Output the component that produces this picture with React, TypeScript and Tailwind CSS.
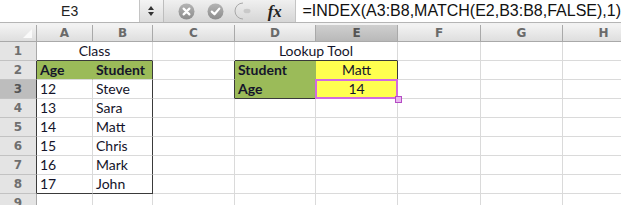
import React from "react";

type Cell = {
  text?: string;
  span?: number;
  bg?: string;
  bold?: boolean;
  align?: "left" | "center";
  r?: string;
  b?: string;
  sel?: boolean;
};

const cols = ["A", "B", "C", "D", "E", "F", "G", "H"];
const widths = "grid-cols-[37px_56px_60px_82px_81px_82px_83px_82px_82px]";

const DARK = "border-r-[#3a3a3a]";
const DARKB = "border-b-[#3a3a3a]";

const names = ["Steve", "Sara", "Matt", "Chris", "Mark", "John"];

function buildRows(): Cell[][] {
  const rows: Cell[][] = [];
  // row 1
  rows.push([
    { text: "Class", span: 2, align: "center", b: DARKB },
    {},
    { text: "Lookup Tool", span: 2, align: "center", b: DARKB },
    {},
    {},
    {},
  ]);
  // row 2
  rows.push([
    { text: "Age", bold: true, bg: "bg-[#9bbb59]", r: "border-r-[#9bbb59]" },
    { text: "Student", bold: true, bg: "bg-[#9bbb59]", r: DARK },
    { r: DARK },
    { text: "Student", bold: true, bg: "bg-[#9bbb59]", r: "border-r-[#9bbb59]", b: "border-b-[#9bbb59]" },
    { text: "Matt", align: "center", bg: "bg-[#ffff4f]", r: DARK, b: "border-b-[#ffff4f]" },
    {},
    {},
    {},
  ]);
  for (let i = 0; i < 6; i++) {
    const last = i === 5;
    const row: Cell[] = [
      { text: String(12 + i), b: last ? DARKB : undefined },
      { text: names[i], r: DARK, b: last ? DARKB : undefined },
    ];
    if (i === 0) {
      row.push({ r: DARK });
      row.push({ text: "Age", bold: true, bg: "bg-[#9bbb59]", r: "border-r-[#9bbb59]", b: DARKB });
      row.push({ text: "14", align: "center", bg: "bg-[#ffff4f]", r: DARK, b: DARKB, sel: true });
    } else {
      row.push({}, {}, {});
    }
    row.push({}, {}, {});
    rows.push(row);
  }
  rows.push([{}, {}, {}, {}, {}, {}, {}, {}]);
  return rows;
}

function Circle({ check }: { check?: boolean }) {
  return (
    <svg width="17" height="17" viewBox="0 0 17 17">
      <defs>
        <linearGradient id={check ? "gc" : "gx"} x1="0" y1="0" x2="0" y2="1">
          <stop offset="0" stopColor="#b4b4b4" />
          <stop offset="1" stopColor="#8c8c8c" />
        </linearGradient>
      </defs>
      <circle cx="8.5" cy="8.5" r="8" fill={`url(#${check ? "gc" : "gx"})`} />
      {check ? (
        <path d="M4.8 8.6 L7.5 11.3 L12.3 5.6" stroke="#fff" strokeWidth="2.2" fill="none" strokeLinecap="round" strokeLinejoin="round" />
      ) : (
        <path d="M5.6 5.6 L11.4 11.4 M11.4 5.6 L5.6 11.4" stroke="#fff" strokeWidth="2.2" strokeLinecap="round" />
      )}
    </svg>
  );
}

export default function App() {
  const rows = buildRows();
  return (
    <div className="h-[205px] w-[621px] overflow-hidden bg-white font-['Lato',sans-serif]">
      {/* formula bar */}
      <div className="flex h-[23px] border-b border-[#b5b5b5]">
        <div className="flex w-[144px] items-center justify-center border-r border-[#c4c4c4] bg-white font-['Liberation_Sans',sans-serif] text-[14px] text-[#222]">
          E3
        </div>
        <div className="flex w-[24px] flex-col items-center justify-center gap-[2px] border-r border-[#bdbdbd] bg-gradient-to-b from-[#f4f4f4] to-[#dcdcdc]">
          <span className="h-0 w-0 border-x-[3px] border-b-[4px] border-x-transparent border-b-[#333]" />
          <span className="h-0 w-0 border-x-[3px] border-t-[4px] border-x-transparent border-t-[#333]" />
        </div>
        <div className="flex w-[134px] items-center bg-gradient-to-b from-[#f0f0f0] to-[#d6d6d6] pl-[14px]">
          <Circle />
          <span className="w-[12px]" />
          <Circle check />
          <svg width="20" height="18" viewBox="0 0 20 18" className="ml-[10px]">
            <path d="M9 1 A8 8 0 0 0 9 17" stroke="#a8a8a8" strokeWidth="1" fill="none" />
            <ellipse cx="13" cy="9" rx="3.5" ry="2.3" fill="#c9c9c9" />
          </svg>
          <span className="ml-[14px] font-['Liberation_Serif',serif] text-[17px] font-bold italic leading-none text-[#222]">fx</span>
        </div>
        <div className="flex flex-1 items-center border-l border-[#c4c4c4] bg-white pl-[7px] font-['Liberation_Sans',sans-serif] text-[16px] text-[#111]">
          =INDEX(A3:B8,MATCH(E2,B3:B8,FALSE),1)
        </div>
      </div>
      <div className="h-[2px] bg-[#f2f2f2]" />
      {/* sheet */}
      <div className={`grid ${widths} grid-rows-[17px_repeat(9,19px)]`}>
        <div className="relative border-r border-b border-[#a9a9a9] bg-gradient-to-b from-[#f3f3f3] to-[#dedede]">
          <span className="absolute right-[4px] bottom-[3px] h-0 w-0 border-l-[9px] border-b-[9px] border-l-transparent border-b-[#fafafa]" />
        </div>
        {cols.map((c) => (
          <div
            key={c}
            className={`flex items-center justify-center border-r border-b border-[#a9a9a9] font-['DejaVu_Sans',sans-serif] text-[12px] font-bold ${
              c === "E" ? "bg-gradient-to-b from-[#cfcfcf] to-[#b9b9b9] text-[#555]" : "bg-gradient-to-b from-[#f3f3f3] to-[#dedede] text-[#6a6a6a]"
            }`}
          >
            {c}
          </div>
        ))}
        {rows.map((row, ri) => (
          <React.Fragment key={ri}>
            <div
              className={`flex items-center justify-center border-r border-b font-['DejaVu_Sans',sans-serif] text-[12px] font-bold ${
                ri === 2 ? "bg-[#bdbdbd] text-[#555]" : "bg-[#e4e4e4] text-[#6f6f6f]"
              } border-b-[#c2c2c2] ${ri >= 1 && ri <= 7 ? "border-r-[#3a3a3a]" : "border-r-[#a9a9a9]"}`}
            >
              {ri + 1}
            </div>
            {row.map((cell, ci) => (
              <div
                key={ci}
                className={`relative flex items-center border-r border-b border-[#dadada] px-[3px] text-[14px] leading-none text-[#14142a] ${
                  cell.span === 2 ? "col-span-2" : ""
                } ${cell.bg ?? "bg-white"} ${cell.r ?? ""} ${cell.b ?? ""} ${cell.bold ? "font-bold" : ""} ${
                  cell.align === "center" ? "justify-center" : "justify-start"
                }`}
              >
                {cell.sel && (
                  <>
                    <span className="absolute -top-[1px] -left-[1px] -right-[1px] -bottom-[1px] border-2 border-[#d26ae0]" />
                    <span className="absolute -right-[5px] -bottom-[5px] z-10 h-[7px] w-[7px] border border-[#b44cc4] bg-[#e9b6f0]" />
                  </>
                )}
                <span className="relative">{cell.text}</span>
              </div>
            ))}
          </React.Fragment>
        ))}
      </div>
    </div>
  );
}
